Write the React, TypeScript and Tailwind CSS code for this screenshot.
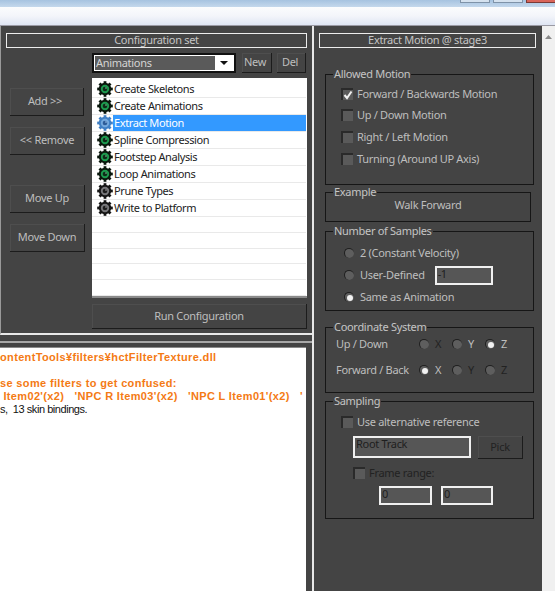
import React from "react";

const font = "font-['Noto_Sans',sans-serif] tracking-[-0.3px]";

function Gear({ core, ring, rim, glint }: { core: string; ring: string; rim: string; glint: string }) {
  const spikes = [0, 45, 90, 135];
  return (
    <svg width="16" height="16" viewBox="0 0 16 16" className="shrink-0">
      {spikes.map((a) => (
        <rect key={a} x="6.6" y="0.2" width="2.8" height="15.6" fill={rim} transform={`rotate(${a} 8 8)`} />
      ))}
      <circle cx="8" cy="8" r="6.2" fill={rim} />
      <circle cx="8" cy="8" r="4.2" fill={ring} />
      <circle cx="8" cy="8" r="2.3" fill={core} />
      <circle cx="9" cy="7" r="0.8" fill={glint} />
    </svg>
  );
}

function ListRow({ label, kind, selected }: { label?: string; kind?: "green" | "gray" | "blue"; selected?: boolean }) {
  return (
    <div className="h-[17px] flex items-center border-b border-[#e9e9e9] pl-[5px] text-[11px] tracking-[-0.4px] text-[#222]">
      <div className="w-[16px] shrink-0 flex items-center">
        {kind === "green" && <Gear rim="#0a170d" ring="#1c9a4e" core="#0e2a18" glint="#7fd49f" />}
        {kind === "gray" && <Gear rim="#151515" ring="#77777a" core="#1e1e1e" glint="#aaaaaa" />}
        {kind === "blue" && <Gear rim="#3f7fc4" ring="#74a9de" core="#2d5c98" glint="#a9cdf0" />}
      </div>
      {label && (
        <div className={`h-[16px] flex-1 flex items-center pl-[1px] ${selected ? "bg-[#3399ff] text-white" : ""}`}>{label}</div>
      )}
    </div>
  );
}

function MaxButton({ label, className }: { label: string; className: string }) {
  return (
    <div
      className={`flex items-center justify-center bg-[#444444] border-r border-b border-[#1c1c1c] shadow-[inset_1px_1px_0_#4e4e4e] text-[11px] text-[#bebebe] ${className}`}
    >
      {label}
    </div>
  );
}

function TitleBox({ label, className }: { label: string; className: string }) {
  return (
    <div className={`h-[15px] border border-[#ececec] flex items-center justify-center text-[11px] text-[#c4c4c4] ${className}`}>
      {label}
    </div>
  );
}

function Group({ title, className, children }: { title: string; className: string; children?: React.ReactNode }) {
  return (
    <div className={`relative border border-[#161616] ${className}`}>
      <span className="absolute left-[7px] -top-[8px] px-[1px] bg-[#444444] text-[11px] leading-[14px] text-[#c4c4c4]">{title}</span>
      {children}
    </div>
  );
}

function Check({ on, label, dim, className }: { on?: boolean; label: string; dim?: boolean; className?: string }) {
  return (
    <div className={`flex items-center h-[14px] ${className ?? ""}`}>
      <div className="w-[12px] h-[12px] bg-[#5a5a5a] border-t-2 border-l-2 border-[#2a2a2a] flex items-center justify-center">
        {on && (
          <svg width="10" height="10" viewBox="0 0 10 10">
            <path d="M1.5 5 L4 8 L8.5 1.5" stroke="#f0f0f0" strokeWidth="2" fill="none" />
          </svg>
        )}
      </div>
      <span className={`ml-[4px] text-[11px] ${dim ? "text-[#222]" : "text-[#bebebe]"}`}>{label}</span>
    </div>
  );
}

function Radio({ on }: { on?: boolean }) {
  return (
    <div className="w-[10px] h-[10px] rounded-full bg-[#5e5e5e] border-t border-l border-[#1e1e1e] flex items-center justify-center shrink-0">
      {on && <div className="w-[6px] h-[6px] rounded-full bg-[#f2f2f2]" />}
    </div>
  );
}

function RadioRow({ on, label, className }: { on?: boolean; label: string; className?: string }) {
  return (
    <div className={`flex items-center h-[14px] ${className ?? ""}`}>
      <Radio on={on} />
      <span className="ml-[6px] text-[11px] text-[#bebebe]">{label}</span>
    </div>
  );
}

function Axis({ on, label, dim }: { on?: boolean; label: string; dim?: boolean }) {
  return (
    <div className="flex items-center w-[33px]">
      <Radio on={on} />
      <span className={`ml-[6px] text-[11px] ${dim ? "text-[#222]" : "text-[#bebebe]"}`}>{label}</span>
    </div>
  );
}

function Field({ value, className }: { value: string; className: string }) {
  return (
    <div className={`border-2 border-[#f0f0f0] bg-[#565656] text-[11px] leading-[11px] text-[#1e1e1e] pl-[1px] ${className}`}>{value}</div>
  );
}

export default function App() {
  const steps: { label: string; kind: "green" | "gray" | "blue"; selected?: boolean }[] = [
    { label: "Create Skeletons", kind: "green" },
    { label: "Create Animations", kind: "green" },
    { label: "Extract Motion", kind: "blue", selected: true },
    { label: "Spline Compression", kind: "green" },
    { label: "Footstep Analysis", kind: "green" },
    { label: "Loop Animations", kind: "green" },
    { label: "Prune Types", kind: "gray" },
    { label: "Write to Platform", kind: "gray" },
  ];
  const orange = "font-bold text-[#f47a14] text-[11px] tracking-[0.35px]";
  return (
    <div className={`w-[555px] h-[591px] overflow-hidden flex flex-col bg-[#444444] ${font}`}>
      <div className="h-[7px] shrink-0 bg-gradient-to-b from-[#a6c3e0] to-[#c4d8ec] flex justify-end">
        <div className="w-[30px] h-[3px] mr-[3px] bg-[#d5e2ef] border-b border-x border-[#7f93a8]" />
        <div className="w-[30px] h-[3px] mr-[3px] bg-[#d5e2ef] border-b border-x border-[#7f93a8]" />
        <div className="w-[29px] h-[3px] bg-[#d9655a] border-b border-l border-[#7a3a36]" />
      </div>
      <div className="h-[19px] shrink-0 bg-gradient-to-b from-[#fbfcfd] via-[#f3f5fa] to-[#dfe5f3] border-b border-[#9a9aa4]" />
      <div className="flex-1 flex min-h-0">
        <div className="w-[314px] shrink-0 flex flex-col border-r-2 border-[#e8e8e8]">
          <div className="h-[309px] shrink-0 pt-[7px] pl-[5px] border-l border-[#9a9a9a] border-b-2 border-b-[#e8e8e8] flex flex-col">
            <TitleBox label="Configuration set" className="w-[301px]" />
            <div className="flex mt-[5px]">
              <div className="w-[86px] shrink-0 pl-[4px] pt-[35px] flex flex-col">
                <MaxButton label="Add >>" className="w-[74px] h-[28px] pr-[3px]" />
                <MaxButton label="<< Remove" className="w-[75px] h-[28px] mt-[11px]" />
                <MaxButton label="Move Up" className="w-[75px] h-[28px] mt-[30px]" />
                <MaxButton label="Move Down" className="w-[75px] h-[28px] mt-[11px]" />
              </div>
              <div className="w-[215px] flex flex-col">
                <div className="flex items-start">
                  <div className="w-[144px] h-[20px] border-2 border-[#111] bg-white flex items-center p-[1px]">
                    <div className="flex-1 h-full bg-[#5a5a5a] text-[11px] leading-[14px] text-[#d4d4d4] pl-[1px]">Animations</div>
                    <div className="w-[18px] flex justify-center">
                      <svg width="8" height="4" viewBox="0 0 8 4"><path d="M0 0 L8 0 L4 4 Z" fill="#111" /></svg>
                    </div>
                  </div>
                  <MaxButton label="New" className="w-[30px] h-[20px] ml-[6px] pr-[3px]" />
                  <MaxButton label="Del" className="w-[29px] h-[20px] ml-[5px] pr-[2px]" />
                </div>
                <div className="mt-[5px] h-[220px] bg-white border-b-2 border-[#8a8a8a] pt-[3px] pr-[1px] flex flex-col">
                  {steps.map((s) => (
                    <ListRow key={s.label} {...s} />
                  ))}
                  {[0, 1, 2, 3, 4].map((i) => (
                    <ListRow key={i} />
                  ))}
                </div>
                <MaxButton label="Run Configuration" className="w-[215px] h-[25px] mt-[6px]" />
              </div>
            </div>
          </div>
          <div className="flex-1 mt-[6px] border-t-2 border-[#a8a8a8] pr-[6px] pt-[4px] min-h-0">
            <div className="h-full bg-white border-t border-[#8a8a8a] pt-[3px] overflow-hidden leading-[13px] whitespace-nowrap font-['Liberation_Sans',sans-serif]">
              <div className={`${orange} h-[26px]`}>ontentTools¥filters¥hctFilterTexture.dll</div>
              <div className={orange}>se some filters to get confused:</div>
              <div className={orange}>&nbsp;Item02'(x2)&nbsp;&nbsp;&nbsp;'NPC R Item03'(x2)&nbsp;&nbsp;&nbsp;'NPC L Item01'(x2)&nbsp;&nbsp;&nbsp;'</div>
              <div className="text-[#111] text-[11px] tracking-[-0.45px]">s,&nbsp; 13 skin bindings.</div>
            </div>
          </div>
        </div>
        <div className="w-[228px] shrink-0 pt-[7px] pl-[5px] flex flex-col">
          <TitleBox label="Extract Motion @ stage3" className="w-[217px]" />
          <div className="pl-[6px] flex flex-col">
            <Group title="Allowed Motion" className="w-[209px] h-[111px] mt-[26px] pt-[12px] pl-[15px] flex flex-col">
              <Check on label="Forward / Backwards Motion" />
              <Check label="Up / Down Motion" className="mt-[7px]" />
              <Check label="Right / Left Motion" className="mt-[8px]" />
              <Check label="Turning (Around UP Axis)" className="mt-[8px]" />
            </Group>
            <Group title="Example" className="w-[206px] h-[30px] mt-[7px] pb-[4px] flex items-center justify-center">
              <span className="text-[11px] text-[#bebebe]">Walk Forward</span>
            </Group>
            <Group title="Number of Samples" className="w-[209px] h-[80px] mt-[9px] pt-[14px] pl-[18px] flex flex-col">
              <RadioRow label="2 (Constant Velocity)" />
              <div className="flex items-center mt-[8px] h-[14px]">
                <RadioRow label="User-Defined" />
                <Field value="-1" className="w-[58px] h-[19px] ml-[10px]" />
              </div>
              <RadioRow on label="Same as Animation" className="mt-[8px]" />
            </Group>
            <Group title="Coordinate System" className="w-[209px] h-[66px] mt-[16px] pt-[9px] pl-[10px] flex flex-col">
              <div className="flex items-center h-[14px]">
                <span className="w-[83px] text-[11px] text-[#bebebe]">Up / Down</span>
                <Axis label="X" dim />
                <Axis label="Y" />
                <Axis on label="Z" />
              </div>
              <div className="flex items-center h-[14px] mt-[12px]">
                <span className="w-[83px] text-[11px] text-[#bebebe]">Forward / Back</span>
                <Axis on label="X" />
                <Axis label="Y" dim />
                <Axis label="Z" dim />
              </div>
            </Group>
            <Group title="Sampling" className="w-[209px] h-[118px] mt-[8px] pt-[13px] pl-[15px] flex flex-col">
              <Check label="Use alternative reference" />
              <div className="flex mt-[7px] ml-[12px]">
                <Field value="Root Track" className="w-[118px] h-[22px]" />
                <MaxButton label="Pick" className="w-[45px] h-[23px] ml-[7px] !text-[#222]" />
              </div>
              <Check label="Frame range:" dim className="mt-[7px] ml-[12px]" />
              <div className="flex mt-[6px] ml-[38px]">
                <Field value="0" className="w-[53px] h-[19px]" />
                <Field value="0" className="w-[52px] h-[19px] ml-[9px]" />
              </div>
            </Group>
          </div>
        </div>
        <div className="flex-1 bg-[#f0f0f0] flex justify-center pt-[9px]">
          <svg width="7" height="4" viewBox="0 0 7 4"><path d="M0 4 L3.5 0 L7 4 Z" fill="#8a8a8a" /></svg>
        </div>
      </div>
    </div>
  );
}
